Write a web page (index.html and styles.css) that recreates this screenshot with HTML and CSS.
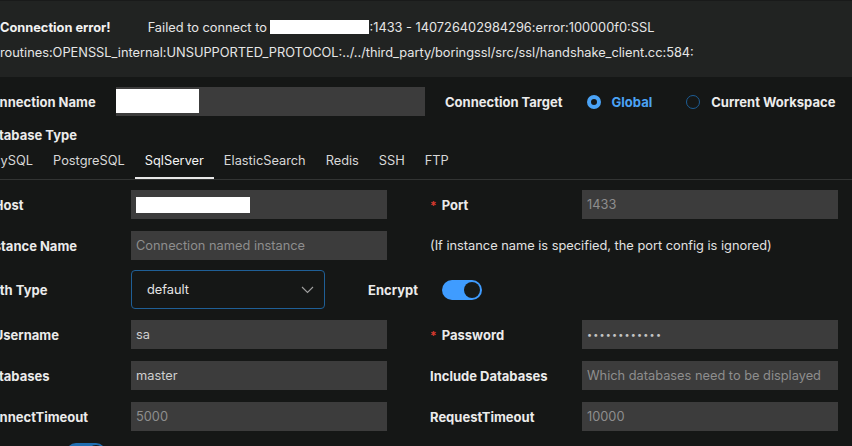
FILE: index.html
```html
<!DOCTYPE html>
<html lang="en">
<head>
<meta charset="utf-8">
<title>Connect</title>
<link rel="stylesheet" href="styles.css">
</head>
<body>
<div class="alert">
  <strong class="alert-title">Connection error!</strong><span class="alert-msg">Failed to connect to <span class="redact redact-host"></span>:1433 - 140726402984296:error:100000f0:SSL routines:OPENSSL_internal:UNSUPPORTED_PROTOCOL:../../third_party/boringssl/src/ssl/handshake_client.cc:584:</span>
</div>

<div class="form">
  <div class="top-row">
    <label class="lbl lbl-name">Connection Name</label>
    <div class="name-field"><span class="redact redact-name"></span></div>
    <label class="lbl lbl-target">Connection Target</label>
    <div class="radio-group">
      <span class="radio checked"></span><span class="radio-text active">Global</span>
      <span class="radio unchecked"></span><span class="radio-text">Current Workspace</span>
    </div>
  </div>

  <div class="lbl section">Database Type</div>

  <div class="tabs">
    <span class="tab">MySQL</span>
    <span class="tab">PostgreSQL</span>
    <span class="tab active">SqlServer</span>
    <span class="tab">ElasticSearch</span>
    <span class="tab">Redis</span>
    <span class="tab">SSH</span>
    <span class="tab">FTP</span>
  </div>

  <div class="grid">
    <label class="lbl"><span class="req">*</span>Host</label>
    <div class="field field-host"><span class="redact redact-hostfield"></span></div>
    <label class="lbl lbl-right"><span class="req">*</span>Port</label>
    <input class="input" placeholder="1433">

    <label class="lbl">Instance Name</label>
    <input class="input" placeholder="Connection named instance">
    <div class="note">(If instance name is specified, the port config is ignored)</div>

    <label class="lbl">Auth Type</label>
    <div class="auth">
      <div class="select">
        <span>default</span>
        <svg class="chev" width="13" height="8" viewBox="0 0 13 8"><polyline points="1,1 6.5,6.5 12,1" fill="none" stroke="#a0a0a0" stroke-width="1.1"/></svg>
      </div>
      <label class="lbl lbl-encrypt">Encrypt</label>
      <span class="toggle"><span class="knob"></span></span>
    </div>

    <label class="lbl"><span class="req">*</span>Username</label>
    <input class="input" value="sa">
    <label class="lbl lbl-right"><span class="req">*</span>Password</label>
    <div class="field"><span class="dots">••••••••••••</span></div>

    <label class="lbl">Databases</label>
    <input class="input" value="master">
    <label class="lbl lbl-right">Include Databases</label>
    <input class="input" placeholder="Which databases need to be displayed">

    <label class="lbl">ConnectTimeout</label>
    <input class="input" placeholder="5000">
    <label class="lbl lbl-right">RequestTimeout</label>
    <input class="input" placeholder="10000">

    <div class="last-row">
      <label class="lbl">SSH Tunnel</label>
      <span class="toggle toggle-ssh"><span class="knob"></span></span>
    </div>
  </div>
</div>
</body>
</html>
```

FILE: styles.css
```css
html, body {
  margin: 0;
  padding: 0;
}

body {
  background: #151716;
  color: #e4e4e4;
  font-family: Inter, "Liberation Sans", Arial, sans-serif;
  font-size: 12.8px;
  overflow: hidden;
}

/* error banner */
.alert {
  box-sizing: border-box;
  height: 77px;
  border-top: 1px solid #191a1a;
  background: #212322;
  padding: 14px 0 0 0;
  line-height: 25px;
  color: #e6e6e6;
}

.alert-title {
  display: inline-block;
  margin-right: 37px;
  color: #f2f2f2;
  font-weight: 700;
  font-size: 12.8px;
}

.redact {
  display: inline-block;
  background: #ffffff;
}

.redact-host {
  width: 99px;
  height: 14px;
  vertical-align: -2px;
}

/* form */
.form {
  margin-left: -18px;
  padding-top: 10px;
}

.lbl {
  font-size: 13px;
  font-weight: 700;
  color: #ebebeb;
  white-space: nowrap;
}

.req {
  color: #d93a2f;
  font-weight: 700;
  margin-right: 5px;
  font-size: 12px;
}

.top-row {
  display: flex;
  align-items: center;
  height: 29px;
}

.lbl-name {
  width: 134px;
  flex: none;
}

.name-field {
  box-sizing: border-box;
  width: 309px;
  height: 29px;
  background: #3c3c3c;
  padding-top: 2px;
  flex: none;
}

.redact-name {
  width: 83px;
  height: 24px;
}

.lbl-target {
  margin-left: 20px;
}

.radio-group {
  display: flex;
  align-items: center;
  margin-left: 24px;
}

.radio {
  box-sizing: border-box;
  width: 14px;
  height: 14px;
  border-radius: 50%;
  flex: none;
}

.radio.checked {
  border: 4.5px solid #4ba3f5;
  background: #151716;
}

.radio.unchecked {
  border: 1.5px solid #1d5d95;
  margin-left: 34px;
}

.radio-text {
  margin-left: 11px;
  font-size: 13px;
  font-weight: 700;
  color: #ececec;
}

.radio-text.active {
  color: #4ba3f5;
}

.section {
  margin-top: 9px;
  line-height: 20px;
}

/* tabs */
.tabs {
  display: flex;
  margin-left: -3px;
  border-bottom: 1px solid #323433;
}

.tab {
  padding: 6px 10px;
  line-height: 20px;
  border-bottom: 2px solid transparent;
  color: #d8d8d8;
}

.tab.active {
  color: #f4f4f4;
  border-bottom-color: #e8e8e8;
}

/* grid */
.grid {
  margin-top: 10px;
  display: grid;
  grid-template-columns: 149px 256px 195px 256px;
  row-gap: 12px;
  align-items: center;
}

.lbl-right {
  padding-left: 43px;
}

.input,
.field {
  box-sizing: border-box;
  width: 100%;
  height: 29px;
  margin: 0;
  border: none;
  outline: none;
  border-radius: 0;
  background: #3c3c3c;
  padding: 0 5px;
  font: inherit;
  color: #cfcfcf;
}

.field {
  display: flex;
  align-items: center;
}

.input::placeholder {
  color: #8e8e8e;
  opacity: 1;
}

.field-host {
  align-items: flex-start;
  padding-top: 7px;
}

.redact-hostfield {
  width: 114px;
  height: 16px;
}

.dots {
  font-size: 9px;
  letter-spacing: 1.2px;
  color: #c4c4c4;
}

.note {
  grid-column: 3 / span 2;
  padding-left: 43px;
  color: #e2e2e2;
  white-space: nowrap;
}

.auth {
  grid-column: 2 / span 3;
  display: flex;
  align-items: center;
  margin-top: -2px;
  margin-bottom: -1px;
}

.select {
  box-sizing: border-box;
  width: 194px;
  height: 39px;
  border: 1px solid #1f5f96;
  border-radius: 4px;
  padding: 0 10px 0 15px;
  display: flex;
  align-items: center;
  justify-content: space-between;
  color: #e4e4e4;
  flex: none;
}

.lbl-encrypt {
  margin-left: 43px;
}

.toggle {
  position: relative;
  display: inline-block;
  width: 40px;
  height: 20px;
  border-radius: 10px;
  background: #3f9cff;
  margin-left: 24px;
  flex: none;
}

.knob {
  position: absolute;
  top: 2px;
  right: 2px;
  width: 16px;
  height: 16px;
  border-radius: 50%;
  background: #171a19;
}

.last-row {
  grid-column: 1 / -1;
  display: flex;
  align-items: flex-start;
  height: 20px;
}

.last-row .lbl {
  line-height: 16px;
  padding-top: 3px;
}

.toggle-ssh {
  margin-left: 11px;
  background: #1f6db0;
}
```
